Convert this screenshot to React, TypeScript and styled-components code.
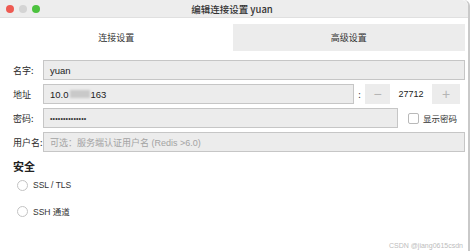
import React from "react";
import styled, { createGlobalStyle } from "styled-components";

const Global = createGlobalStyle`
  html, body { margin: 0; padding: 0; background: #fff; }
  body { font-family: "Noto Sans CJK SC", "Noto Sans", "Liberation Sans", sans-serif; }
  * { box-sizing: border-box; }
`;

const Page = styled.div`
  width: 474px;
  height: 251px;
  display: flex;
  background: #fff;
  overflow: hidden;
`;

const Window = styled.div`
  position: relative;
  width: 470px;
  height: 251px;
  border-right: 2px solid #c9c9c9;
  border-top-right-radius: 6px;
  background: #fff;
  display: flex;
  flex-direction: column;
`;

const TitleBar = styled.div`
  height: 18px;
  background: #ededed;
  border-bottom: 1px solid #e0e0e0;
  border-top-right-radius: 6px;
  display: flex;
  align-items: center;
  padding-left: 6px;
`;

const Lights = styled.div`
  display: flex;
  gap: 5px;
`;

const Light = styled.span<{ $c: string }>`
  width: 8px;
  height: 8px;
  border-radius: 50%;
  background: ${(p) => p.$c};
`;

const Title = styled.div`
  flex: 1;
  text-align: center;
  font-size: 9.5px;
  color: #333;
  font-weight: 500;
  margin-right: 44px;
`;

const Tabs = styled.div`
  display: flex;
  margin-top: 6px;
  padding-right: 3px;
  height: 27px;
`;

const Tab = styled.div<{ $active?: boolean }>`
  flex: 1;
  display: flex;
  align-items: center;
  justify-content: center;
  font-size: 9px;
  color: #333;
  background: ${(p) => (p.$active ? "#fff" : "#ececec")};
`;

const Form = styled.div`
  display: flex;
  flex-direction: column;
  gap: 4px;
  padding: 9px 3px 0 13px;
`;

const Row = styled.div`
  display: flex;
  align-items: center;
  height: 20px;
`;

const Label = styled.div`
  width: 30px;
  font-size: 9px;
  color: #2a2a2a;
  white-space: nowrap;
`;

const Input = styled.div<{ $w?: number; $placeholder?: boolean }>`
  ${(p) => (p.$w ? `width: ${p.$w}px;` : "flex: 1;")}
  height: 20px;
  background: #ececec;
  border: 1px solid #c6c6c6;
  display: flex;
  align-items: center;
  padding-left: 6px;
  font-size: ${(p) => (p.$placeholder ? "9px" : "9.5px")};
  color: ${(p) => (p.$placeholder ? "#a3a3a3" : "#222")};
  font-family: "Liberation Sans", "Noto Sans CJK SC", sans-serif;
  white-space: nowrap;
`;

const Blur = styled.span`
  display: inline-block;
  width: 20px;
  height: 8px;
  background: #c9c9c9;
  margin: 0 1px;
  filter: blur(1px);
`;

const Dots = styled.span`
  font-size: 7px;
  letter-spacing: 0.15px;
  color: #333;
  font-family: "Liberation Sans", sans-serif;
`;

const Colon = styled.span`
  width: 11px;
  text-align: center;
  font-size: 9px;
  color: #444;
`;

const Spin = styled.div`
  display: flex;
  height: 20px;
`;

const SpinBtn = styled.div<{ $w: number }>`
  width: ${(p) => p.$w}px;
  background: #ececec;
  display: flex;
  align-items: center;
  justify-content: center;
  color: #b5b5b5;
  font-size: 14px;
  font-family: "Liberation Sans", sans-serif;
`;

const SpinValue = styled.div`
  width: 42px;
  background: #fff;
  display: flex;
  align-items: center;
  justify-content: center;
  font-size: 9px;
  color: #222;
  font-family: "Liberation Sans", sans-serif;
`;

const Check = styled.label`
  display: flex;
  align-items: center;
  gap: 4px;
  margin-left: 10px;
  font-size: 8.5px;
  color: #333;
`;

const Box = styled.span`
  width: 11px;
  height: 11px;
  border: 1px solid #b9b9b9;
  border-radius: 2px;
  background: #fff;
`;

const Heading = styled.div`
  font-size: 11px;
  font-weight: 700;
  color: #222;
  margin: 6px 0 0 13px;
`;

const Radios = styled.div`
  display: flex;
  flex-direction: column;
  gap: 14px;
  padding: 5px 0 0 17px;
`;

const RadioRow = styled.div`
  display: flex;
  align-items: center;
  gap: 5px;
  height: 12px;
  font-size: 8.5px;
  color: #333;
  font-family: "Liberation Sans", "Noto Sans CJK SC", sans-serif;
`;

const Circle = styled.span`
  width: 11px;
  height: 11px;
  border-radius: 50%;
  border: 1px solid #c3c3c3;
  background: #fff;
`;

const Watermark = styled.div`
  position: absolute;
  right: 5px;
  bottom: 2px;
  font-size: 7px;
  color: #bdbdbd;
  font-family: "Liberation Sans", sans-serif;
`;

export default function App() {
  return (
    <Page>
      <Global />
      <Window>
        <TitleBar>
          <Lights>
            <Light $c="#ee5a52" />
            <Light $c="#d4d4d4" />
            <Light $c="#4cc23e" />
          </Lights>
          <Title>编辑连接设置 yuan</Title>
        </TitleBar>
        <Tabs>
          <Tab $active>连接设置</Tab>
          <Tab>高级设置</Tab>
        </Tabs>
        <Form>
          <Row>
            <Label>名字:</Label>
            <Input>yuan</Input>
          </Row>
          <Row>
            <Label>地址</Label>
            <Input $w={311}>
              10.0<Blur />163
            </Input>
            <Colon>:</Colon>
            <Spin>
              <SpinBtn $w={25}>−</SpinBtn>
              <SpinValue>27712</SpinValue>
              <SpinBtn $w={28}>+</SpinBtn>
            </Spin>
          </Row>
          <Row>
            <Label>密码:</Label>
            <Input $w={355}>
              <Dots>••••••••••••••</Dots>
            </Input>
            <Check>
              <Box />
              显示密码
            </Check>
          </Row>
          <Row>
            <Label>用户名:</Label>
            <Input $placeholder>可选：服务端认证用户名 (Redis &gt;6.0)</Input>
          </Row>
        </Form>
        <Heading>安全</Heading>
        <Radios>
          <RadioRow>
            <Circle />
            SSL / TLS
          </RadioRow>
          <RadioRow>
            <Circle />
            SSH 通道
          </RadioRow>
        </Radios>
        <Watermark>CSDN @jiang0615csdn</Watermark>
      </Window>
    </Page>
  );
}
